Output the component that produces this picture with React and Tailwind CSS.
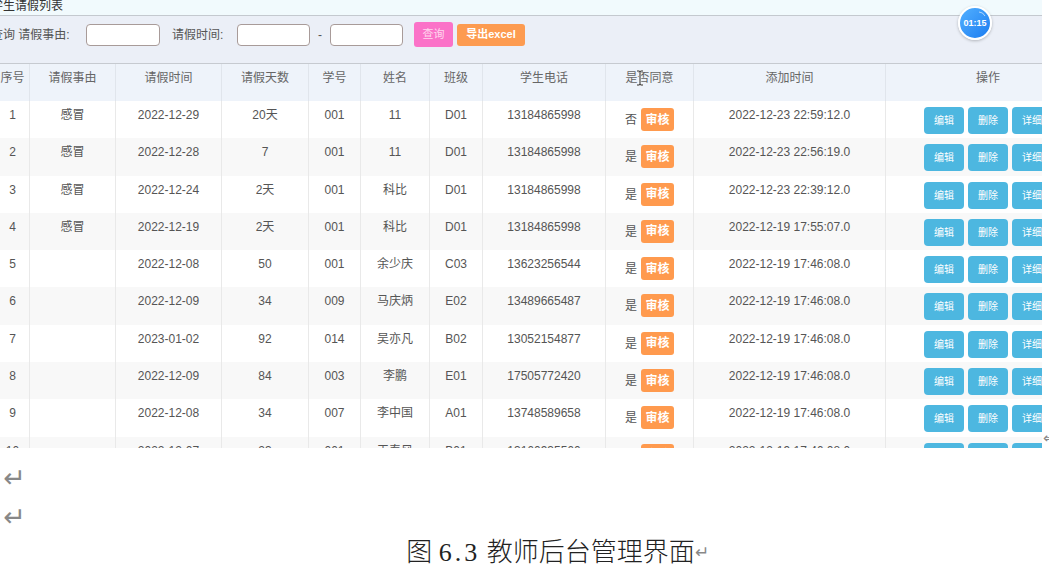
import React from "react";

const cols = "grid grid-cols-[38px_86px_106px_87px_52px_69px_53px_123px_88px_192px_204px]";

const headers = ["序号", "请假事由", "请假时间", "请假天数", "学号", "姓名", "班级", "学生电话", "是否同意", "添加时间", "操作"];

const rows = [
  ["1", "感冒", "2022-12-29", "20天", "001", "11", "D01", "13184865998", "否", "2022-12-23 22:59:12.0"],
  ["2", "感冒", "2022-12-28", "7", "001", "11", "D01", "13184865998", "是", "2022-12-23 22:56:19.0"],
  ["3", "感冒", "2022-12-24", "2天", "001", "科比", "D01", "13184865998", "是", "2022-12-23 22:39:12.0"],
  ["4", "感冒", "2022-12-19", "2天", "001", "科比", "D01", "13184865998", "是", "2022-12-19 17:55:07.0"],
  ["5", "", "2022-12-08", "50", "001", "余少庆", "C03", "13623256544", "是", "2022-12-19 17:46:08.0"],
  ["6", "", "2022-12-09", "34", "009", "马庆炳", "E02", "13489665487", "是", "2022-12-19 17:46:08.0"],
  ["7", "", "2023-01-02", "92", "014", "吴亦凡", "B02", "13052154877", "是", "2022-12-19 17:46:08.0"],
  ["8", "", "2022-12-09", "84", "003", "李鹏", "E01", "17505772420", "是", "2022-12-19 17:46:08.0"],
  ["9", "", "2022-12-08", "34", "007", "李中国", "A01", "13748589658", "是", "2022-12-19 17:46:08.0"],
  ["10", "", "2022-12-07", "23", "001", "王春风", "B01", "13160935560", "是", "2022-12-19 17:46:08.0"],
];

function Cell({ children, first }) {
  return (
    <div className={`flex justify-center border-r border-[#e9e9e9] pt-[6px] leading-[16px] whitespace-nowrap overflow-hidden ${first ? "pl-[4px]" : ""}`}>
      {children}
    </div>
  );
}

function Row({ r, i }) {
  return (
    <div className={`${cols} h-[37.3px] text-[12px] text-[#555] ${i % 2 === 0 ? "bg-white" : "bg-[#f8f8f8]"}`}>
      {r.slice(0, 8).map((c, k) => (
        <Cell key={k} first={k === 0}>{c}</Cell>
      ))}
      <div className="flex justify-center gap-[4px] border-r border-[#e9e9e9]">
        <span className="mt-[11px] leading-[16px]">{r[8]}</span>
        <span className="mt-[7px] h-[23px] w-[33px] rounded-[3px] bg-[#ff9a4e] text-white font-bold text-[12px] flex items-center justify-center">审核</span>
      </div>
      <Cell>{r[9]}</Cell>
      <div className="flex justify-center gap-[4px] pt-[6px]">
        {["编辑", "删除", "详细"].map((b) => (
          <span key={b} className="h-[27px] w-[40px] rounded-[4px] bg-[#4db7e0] text-white text-[10px] flex items-center justify-center">
            {b}
          </span>
        ))}
      </div>
    </div>
  );
}

export default function App() {
  return (
    <div className="w-[1049px] h-[575px] bg-white overflow-hidden font-['Liberation_Sans','Noto_Sans_CJK_SC',sans-serif]">
      <div className="flex items-end">
        <div className="relative w-[1042px] h-[448px] overflow-hidden shrink-0">
          <div className="-ml-[8px] w-[1100px]">
            {/* title */}
            <div className="h-[16px] bg-[#f1fafd] border-b border-[#c4c9cf] text-[12px] leading-[13px] text-[#333]">
              <span className="-ml-[1px]">学生请假列表</span>
            </div>
            {/* search */}
            <div className="h-[48px] pt-[6px] bg-[#ebeff7] border-b border-[#c6cad0] text-[12px] text-[#555]">
              <div className="flex items-center h-[25px]">
                <span className="-ml-[1px] w-[80px] whitespace-nowrap">查询 请假事由:</span>
                <span className="ml-[15px] w-[74px] h-[22px] rounded-[4px] border border-[#a89b99] bg-white"></span>
                <span className="ml-[12px] w-[54px] whitespace-nowrap">请假时间:</span>
                <span className="ml-[11px] w-[73px] h-[22px] rounded-[4px] border border-[#a89b99] bg-white"></span>
                <span className="ml-[6px] w-[8px] text-center">-</span>
                <span className="ml-[6px] w-[73px] h-[22px] rounded-[4px] border border-[#a89b99] bg-white"></span>
                <span className="ml-[11px] w-[39px] h-[25px] rounded-[3px] bg-[#fb72c8] text-[#ffd7ee] text-[11px] flex items-center justify-center">查询</span>
                <span className="ml-[4px] w-[68px] h-[22px] rounded-[3px] bg-[#fd9b50] text-white font-bold text-[11px] flex items-center justify-center">导出excel</span>
              </div>
            </div>
            {/* header */}
            <div className={`${cols} h-[37px] bg-[#eef3fa] text-[12px] text-[#666]`}>
              {headers.map((h, k) => (
                <div key={k} className={`flex justify-center pt-[6px] leading-[16px] whitespace-nowrap ${k < 10 ? "border-r border-[#e0e5ec]" : ""} ${k === 0 ? "pl-[4px]" : ""}`}>
                  {h}
                </div>
              ))}
            </div>
            {rows.map((r, i) => (
              <Row key={i} r={r} i={i} />
            ))}
          </div>
          {/* timer badge */}
          <div className="absolute left-[958px] top-[6px] w-[34px] h-[34px] rounded-full border-2 border-white shadow-[0_1px_3px_rgba(0,0,0,0.25)] bg-linear-to-br from-[#52b0ff] to-[#1a7cf0] flex items-center justify-center">
            <span className="text-white text-[9px] font-bold leading-none">01:15</span>
            <svg className="absolute right-[4px] top-[3px]" width="8" height="6" viewBox="0 0 8 6">
              <path d="M1 1 Q5 1 7 5" stroke="rgba(255,255,255,0.6)" strokeWidth="1" fill="none" />
            </svg>
          </div>
          {/* text cursor */}
          <svg className="absolute left-[636px] top-[70px]" width="8" height="16" viewBox="0 0 8 16">
            <path d="M1 1 H3 Q4 1 4 2 V14 Q4 15 3 15 H1 M7 1 H5 Q4 1 4 2 M4 14 Q4 15 5 15 H7" stroke="#fff" strokeWidth="2.5" fill="none" />
            <path d="M1 1 H3 Q4 1 4 2 V14 Q4 15 3 15 H1 M7 1 H5 Q4 1 4 2 M4 14 Q4 15 5 15 H7" stroke="#222" strokeWidth="1" fill="none" />
          </svg>
        </div>
        <span className="ml-[1px] mb-[2px] text-[15px] leading-[16px] text-[#888] font-['DejaVu_Sans',sans-serif]">⇐</span>
      </div>
      <div className="h-[39px] flex items-center pl-[3px] pt-[20px] text-[27px] leading-none text-[#888] font-['DejaVu_Sans',sans-serif]">↵</div>
      <div className="h-[39px] flex items-center pl-[3px] pt-[20px] text-[27px] leading-none text-[#888] font-['DejaVu_Sans',sans-serif]">↵</div>
      <div className="h-[49px] pt-[4px] flex items-center justify-center pl-[66px] text-[26px] text-[#222] font-light font-['Liberation_Serif','Noto_Sans_CJK_SC',serif]">
        <span className="whitespace-pre">图 <span className="tracking-[3px]">6.3</span> 教师后台管理界面</span>
        <span className="text-[17px] text-[#888] font-['DejaVu_Sans',sans-serif]">↵</span>
      </div>
    </div>
  );
}
